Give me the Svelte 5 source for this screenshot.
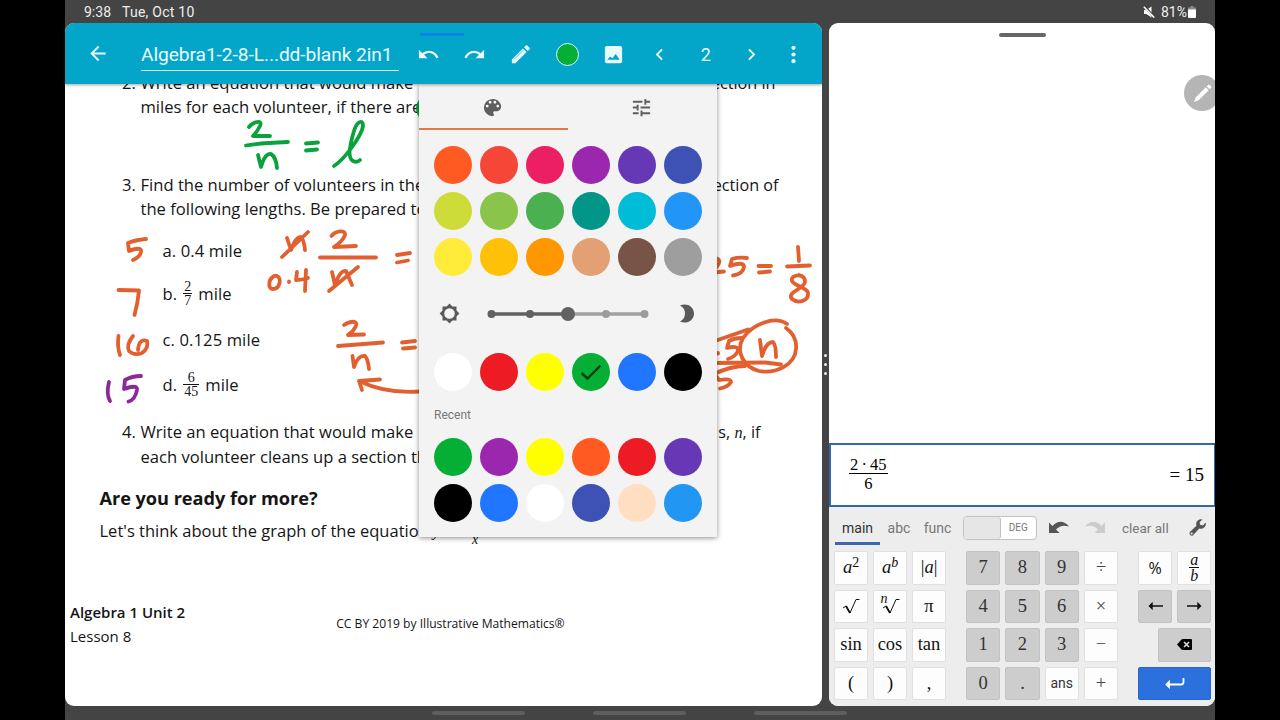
<script>
  const palette = [
    '#ff5a22', '#f64637', '#ec1e64', '#9b27af', '#6738b6', '#3e51b4',
    '#cddc39', '#8bc44a', '#4bb050', '#029688', '#00bcd6', '#2196f8',
    '#ffeb3a', '#ffc107', '#ff9800', '#e3a072', '#785447', '#9e9e9e'
  ];
  const basics = ['#ffffff', '#ed1b24', '#ffff00', '#05ae34', '#2176ff', '#000000'];
  const recent = [
    '#05ae34', '#9b27af', '#ffff00', '#ff5a22', '#ed1b24', '#6738b6',
    '#000000', '#2176ff', '#ffffff', '#3e51b4', '#ffdec2', '#2196f3'
  ];

  let selected = $state('#05ae34');

  const numberKeys = [
    '7', '8', '9', '÷',
    '4', '5', '6', '×',
    '1', '2', '3', '−',
    '0', '.', 'ans', '+'
  ];

  const isDigit = (key) => /^[0-9.]$/.test(key);
</script>

{#snippet frac(top, bottom)}
  <span class="frac"><span>{top}</span><span>{bottom}</span></span>
{/snippet}

{#snippet swatches(colors, checkable)}
  <div class="swatches">
    {#each colors as color}
      <button class="swatch" style:background={color} aria-label={color} onclick={() => (selected = color)}>
        {#if checkable && color === selected}
          <svg viewBox="0 0 38 38"><path d="M9.5 20l6 5.500L28.500 12.500" fill="none" stroke="#07401a" stroke-width="2.400" /></svg>
        {/if}
      </button>
    {/each}
  </div>
{/snippet}

<div class="screen">
  <div class="tablet">
    <header class="status">
      <span>9:38</span>
      <span class="date">Tue, Oct 10</span>
      <svg class="mute" viewBox="0 0 12 12">
        <path d="M1 4h2.500L8.500 .5v11L3.500 8H1z" fill="#fff" />
        <path d="M1.500 .5l10 11" stroke="#444" stroke-width="2.600" />
        <path d="M.8 .8l10.400 10.800" stroke="#fff" stroke-width="1.500" />
      </svg>
      <span>81%</span>
      <svg class="battery" viewBox="0 0 8 12">
        <path d="M2.500 0h3v1.500H8V4H0V1.500h2.500z" fill="#8a8a8a" />
        <path d="M0 3.500h8V11q0 1-1 1H1q-1 0-1-1z" fill="#fff" />
      </svg>
    </header>

    <main class="panes">
      <section class="pane notes">
        <nav class="toolbar">
          <svg class="icon back" viewBox="0 0 24 24"><path d="M20 11H7.830l5.590-5.590L12 4l-8 8 8 8 1.410-1.410L7.830 13H20z" /></svg>
          <span class="title">Algebra1-2-8-L...dd-blank 2in1</span>
          <div class="tools">
            <svg class="icon" viewBox="0 0 24 24"><path d="M12.500 8c-2.650 0-5.050.99-6.900 2.600L2 7v9h9l-3.620-3.620c1.390-1.160 3.160-1.880 5.120-1.880 3.540 0 6.550 2.310 7.600 5.500l2.370-.78C21.080 11.030 17.150 8 12.500 8z" /></svg>
            <svg class="icon" viewBox="0 0 24 24"><path d="M18.400 10.600C16.550 8.990 14.150 8 11.500 8c-4.650 0-8.580 3.030-9.960 7.220L3.900 16c1.050-3.190 4.050-5.500 7.600-5.500 1.950 0 3.730.72 5.120 1.880L13 16h9V7z" /></svg>
            <svg class="icon" viewBox="0 0 24 24"><path d="M3 17.200l11.500-11.500 3.800 3.800L6.800 21H3zM15.700 4.500l1.900-1.900q.7-.7 1.400 0l2.400 2.400q.7.7 0 1.400l-1.900 1.900z" /><path d="M5.600 16.800l9.300-9.300" stroke="#03a5c9" stroke-width=".7" /></svg>
            <span class="pen-color" style:background={selected}></span>
            <svg class="icon" viewBox="0 0 24 24"><path d="M21 19V5a2 2 0 0 0-2-2H5a2 2 0 0 0-2 2v14a2 2 0 0 0 2 2h14a2 2 0 0 0 2-2z" /><path d="M5.500 17.500l3-3.500 2.300 2 3.500-4.500 4.200 6z" fill="#03a5c9" /></svg>
            <svg class="icon" viewBox="0 0 24 24"><path d="M15.410 7.410L14 6l-6 6 6 6 1.410-1.410L10.830 12z" /></svg>
            <span class="page">2</span>
            <svg class="icon" viewBox="0 0 24 24"><path d="M10 6L8.590 7.410 13.170 12l-4.580 4.590L10 18l6-6z" /></svg>
            <svg class="icon" viewBox="0 0 24 24"><circle cx="12" cy="5" r="2.200" /><circle cx="12" cy="12" r="2.200" /><circle cx="12" cy="19" r="2.200" /></svg>
          </div>
          <span class="load-bar"></span>
        </nav>

        <article class="doc">
          <ol class="problems">
            <li>
              <span class="num">2.</span>
              <div class="body">
                <p><span>Write an equation that would make</span><span class="tail t2">section in</span></p>
                <p><span>miles for each volunteer, if there are</span></p>
              </div>
            </li>
            <li class="third">
              <span class="num">3.</span>
              <div class="body">
                <p><span>Find the number of volunteers in the</span><span class="tail t3">section of</span></p>
                <p><span>the following lengths. Be prepared to</span></p>
                <ul class="parts">
                  <li>a. 0.4 mile</li>
                  <li>b. {@render frac('2', '7')} mile</li>
                  <li>c. 0.125 mile</li>
                  <li>d. {@render frac('6', '45')} mile</li>
                </ul>
              </div>
            </li>
            <li class="fourth">
              <span class="num">4.</span>
              <div class="body">
                <p><span>Write an equation that would make</span><span class="tail t4">s, <i>n</i>, if</span></p>
                <p><span>each volunteer cleans up a section th</span></p>
              </div>
            </li>
          </ol>
          <h2>Are you ready for more?</h2>
          <p class="think">Let's think about the graph of the equation <i class="y">y</i><i class="x">x</i></p>
          <footer>
            <div><b>Algebra 1 Unit 2</b><br />Lesson 8</div>
            <small>CC BY 2019 by Illustrative Mathematics®</small>
          </footer>
        </article>

        <svg class="ink" viewBox="65 84 757 622">
          <g stroke="#0aa23c">
            <path d="M249 127C253 122 263 119 260 126Q257 132 253 136L270 136" />
            <path d="M246 145.500Q260 143 288 142" />
            <path d="M258 155L261 167Q265 153 271 154Q276 157 277 168" />
            <path d="M306 143.500L318 142.500M306 150.500L317 149.500" />
            <path d="M334 166C345 159 362 135 363 126C363 119 357 121 354 131C350 144 347 158 353 161Q357 163 360 160" />
            <path d="M422 99Q414 108 422 118" />
          </g>
          <g stroke="#e2602f">
            <path d="M146 239Q135 240 128 243L129 251Q142 246 141 252Q140 257 133 260" />
            <path d="M118.500 290L139 290.500Q138 302 134.500 315" />
            <path d="M118.500 336Q117 347 120 355M133 336Q126 345 129 351Q134 356 142 353Q149 348 147 341Q139 338 138 350" />
            <path d="M287 238L291 250Q296 236 301 237Q304 240 305 250M282 257L308 232" />
            <path d="M331.500 236C335 231 346 229 345 235Q343 241 334 247L356 246M320 257.500L376 257.500" />
            <path d="M397 255L410 253M397 262.500L408 260.500" />
            <path d="M273 277C268 280 268 289 273 289C280 289 282 278 277 276Q274 275 272 278M289 281.500L289 282M297 272L296 280Q302 280 308 278M306 270L305 291" />
            <path d="M332 272L335 285Q340 270 346 271L352 285M329 291L358 267" />
            <path d="M344 325C350 321 358 320 356 326Q353 332 348 335L364 334.500M338 346L383 342.500" />
            <path d="M352.500 356L354 367Q358 355 365 356Q368 359 369 369M402 342.500L415 341M403 348.500L415 347.500" />
            <path d="M420 391.500Q386 394 359 381L380 379.500M359 381L362 390" />
            <path d="M714 258Q722 259 718 265L713 272.500L724 271.500M747 258Q738 257 732 259L730 266Q744 261 744 267Q743 274 733 275.500" />
            <path d="M758.500 266L771 266M759 272.500L770 271.500M798 247L799 261M787 266.500L810 265.500" />
            <path d="M804 278C800 273 790 276 792 281C794 286 807 287 808 293C809 301 798 304 792 299C786 292 804 289 805 282Q805 276 799 275" />
            <path d="M787 324C774 315 752 325 743 338C735 352 744 367 759 371C776 374 795 365 796 349C797 339 793 333 786 328" />
            <path d="M760 340L762 356Q766 342 773 342Q776 345 776 357M715 363L765 362.500L781 364.500" />
            <path d="M715 341L748 329.500M741 338Q734 338 729 341L727 348Q739 345 738 351Q735 357 728 359M718 353L718 353.500" />
            <path d="M714 374Q731 366 745 366M717 377L719 380Q731 378 731 382Q728 387 720 388.500" />
          </g>
          <g stroke="#8a2a97">
            <path d="M109 382Q106 394 110 401M141 376Q132 376 125 380L124 389Q138 384 137 390Q135 400 128.500 401.500" />
          </g>
        </svg>

        <aside class="picker">
          <div class="tabs">
            <div class="tab active">
              <svg viewBox="0 0 24 24"><path d="M12 3a9 9 0 0 0 0 18c.83 0 1.500-.67 1.500-1.500 0-.39-.15-.74-.39-1.010-.23-.26-.38-.61-.38-.99 0-.83.67-1.500 1.500-1.500H16c2.760 0 5-2.240 5-5 0-4.420-4.030-8-9-8zm-5.500 9a1.500 1.500 0 1 1 0-3 1.500 1.500 0 0 1 0 3zm3-4a1.500 1.500 0 1 1 0-3 1.500 1.500 0 0 1 0 3zm5 0a1.500 1.500 0 1 1 0-3 1.500 1.500 0 0 1 0 3zm3 4a1.500 1.500 0 1 1 0-3 1.500 1.500 0 0 1 0 3z" /></svg>
            </div>
            <div class="tab">
              <svg viewBox="0 0 24 24"><path d="M3 17v2h6v-2H3zM3 5v2h10V5H3zm10 16v-2h8v-2h-8v-2h-2v6h2zM7 9v2H3v2h4v2h2V9H7zm14 4v-2H11v2h10zm-6-4h2V7h4V5h-4V3h-2v6z" /></svg>
            </div>
          </div>
          {@render swatches(palette, false)}
          <div class="brightness">
            <svg class="sun" viewBox="0 0 24 24"><path d="M20 8.690V4h-4.690L12 .69 8.690 4H4v4.690L.69 12 4 15.310V20h4.690L12 23.310 15.310 20H20v-4.690L23.310 12zM12 18a6 6 0 1 1 0-12 6 6 0 0 1 0 12z" /></svg>
            <svg class="track" viewBox="0 0 162 16">
              <path d="M81 8h77" stroke="#a0a0a0" stroke-width="3.500" />
              <path d="M4 8h77" stroke="#616161" stroke-width="3.500" />
              <g fill="#616161"><circle cx="4.500" cy="8" r="4" /><circle cx="43" cy="8" r="4" /><circle cx="81" cy="8" r="7" /></g>
              <g fill="#9c9c9c"><circle cx="119" cy="8" r="4" /><circle cx="157.500" cy="8" r="4" /></g>
            </svg>
            <svg class="moon" viewBox="0 0 14 19"><path d="M0 1.500C6-1.500 14 2 14 9.500S6 20.500 0 17.500Q5 15 5 9.500T0 1.500z" /></svg>
          </div>
          {@render swatches(basics, true)}
          <span class="recent-label">Recent</span>
          {@render swatches(recent, false)}
        </aside>
      </section>

      <div class="divider"><i></i><i></i><i></i></div>

      <section class="pane calc">
        <div class="history">
          <span class="handle"></span>
          <span class="edit">
            <svg viewBox="0 0 20 20"><path d="M1 19l2-5L13.500 3.500l3 3L6 17zM14.500 2.500L16 1q.8-.7 1.500 0L19 2.500q.7.8 0 1.500l-1.500 1.500z" fill="#fff" /></svg>
          </span>
        </div>
        <div class="expression">
          {@render frac('2 · 45', '6')}
          <span class="result">= 15</span>
        </div>
        <div class="keypad">
          <div class="modes">
            <span class="mode on">main</span>
            <span class="mode">abc</span>
            <span class="mode">func</span>
            <div class="angle"><span></span><span>DEG</span></div>
            <svg class="undo" viewBox="0 0 20 14"><path d="M0 2.500V13h10.500L7 9.500Q12 4 20 6.500Q12-2.500 3.500 6z" /></svg>
            <svg class="undo redo" viewBox="0 0 20 14"><path d="M20 2.500V13H9.500L13 9.500Q8 4 0 6.500Q8-2.500 16.500 6z" /></svg>
            <span class="clear">clear all</span>
            <svg class="wrench" viewBox="0 0 16 16"><path d="M.8 12.200L7 6.300Q6 3.500 8.200 1.500 10-.2 12.700.3L10 3l.5 2.500 2.500.5 2.700-2.700Q16.300 6 14.500 7.800 12.500 9.800 9.700 9L3.800 15.200Q2.500 16.300 1.200 15T.8 12.200zM2.500 12.700a.9.9 0 1 0 .1 0z" fill-rule="evenodd" /></svg>
          </div>
          <div class="keys">
            <div class="group fn">
              <button><i>a</i><sup>2</sup></button>
              <button><i>a</i><sup><i>b</i></sup></button>
              <button class="abs">|<i>a</i>|</button>
              <button aria-label="square root"><svg class="root" viewBox="0 0 18 17"><path d="M1 10l3-2 4 7L14 1.500h3.500" /><path d="M4 8l4 7" class="thick" /></svg></button>
              <button aria-label="nth root" class="nth"><i>n</i><svg class="root" viewBox="0 0 18 17"><path d="M1 10l3-2 4 7L14 1.500h3.500" /><path d="M4 8l4 7" class="thick" /></svg></button>
              <button>π</button>
              <button>sin</button>
              <button>cos</button>
              <button>tan</button>
              <button>(</button>
              <button>)</button>
              <button>,</button>
            </div>
            <div class="group digits">
              {#each numberKeys as key}
                <button class:dark={isDigit(key)} class:ans={key === 'ans'} class:op={!isDigit(key) && key !== 'ans'}>{key}</button>
              {/each}
            </div>
            <div class="group nav">
              <button class="percent">%</button>
              <button>{@render frac('a', 'b')}</button>
              <button class="dark" aria-label="left"><svg class="arrow" viewBox="0 0 15 8"><path d="M15 4H2M4 1.500L1.500 4 4 6.500z" /></svg></button>
              <button class="dark" aria-label="right"><svg class="arrow" viewBox="0 0 15 8"><path d="M0 4h13M11 1.500L13.500 4 11 6.500z" /></svg></button>
              <button class="dark backspace" aria-label="backspace">
                <svg viewBox="0 0 15 11"><path d="M0 5.500L4.500 .5Q5 0 6 0h8q1 0 1 1v9q0 1-1 1H6q-1 0-1.500-.5z" /><path d="M7 3l5 5M12 3L7 8" stroke="#ddd" stroke-width="1.600" /></svg>
              </button>
              <button class="enter" aria-label="enter">
                <svg viewBox="0 0 20 12"><path d="M18.500 1v4q0 2.500-2.500 2.500H3M4 5L1.500 7.500 4 10z" fill="none" stroke="#fff" stroke-width="1.800" /></svg>
              </button>
            </div>
          </div>
        </div>
      </section>
    </main>

    <div class="gesture"><i></i><i></i><i></i></div>
  </div>
</div>

<style>
  :global(body) {
    background: #000;
    overflow: hidden;
  }

  .screen {
    width: 1280px;
    height: 720px;
    box-sizing: border-box;
    padding: 0 65px;
    background: #000;
    font-family: Roboto, sans-serif;
  }

  .tablet {
    height: 720px;
    background: #444;
    display: flex;
    flex-direction: column;
    overflow: hidden;
  }

  .status {
    height: 23px;
    display: flex;
    align-items: center;
    padding: 0 19px 0 19px;
    color: #eee;
    font-size: 14px;
  }

  .date {
    margin-left: 11px;
    flex: 1;
    letter-spacing: 0.25px;
  }

  .mute {
    width: 12px;
    height: 12px;
    margin-right: 6px;
  }

  .battery {
    width: 8px;
    height: 12px;
    margin-left: 1px;
  }

  .panes {
    height: 683px;
    display: flex;
  }

  .pane {
    position: relative;
    background: #fff;
    border-radius: 9px;
    overflow: hidden;
  }

  .notes {
    width: 756.500px;
  }

  .toolbar {
    height: 61px;
    display: flex;
    align-items: center;
    background: #03a5c9;
    box-shadow: 0 1px 3px rgba(0, 0, 0, 0.35);
    position: relative;
    z-index: 3;
    color: #e9fbff;
  }

  .icon {
    width: 23px;
    height: 23px;
    fill: #e9fbff;
  }

  .back {
    width: 24px;
    margin-left: 21px;
  }

  .title {
    width: 258px;
    height: 30px;
    line-height: 28px;
    margin: 4px 0 0 31px;
    box-sizing: border-box;
    border-bottom: 1px solid #c9f1f9;
    font-size: 19.200px;
    letter-spacing: -0.08px;
    white-space: nowrap;
  }

  .tools {
    display: grid;
    grid-template-columns: repeat(8, 46.200px) 36px;
    align-items: center;
    justify-items: center;
    margin: 1px 0 0 6.500px;
  }

  .pen-color {
    width: 21px;
    height: 21px;
    border: 1.500px solid #d8f7ff;
    border-radius: 50%;
  }

  .page {
    font-size: 18px;
  }

  .load-bar {
    position: absolute;
    left: 355px;
    top: 10px;
    width: 44px;
    height: 3px;
    background: #0a84e8;
  }

  .doc {
    height: 622px;
    overflow: hidden;
    font-family: 'Open Sans', sans-serif;
    font-size: 16.600px;
    line-height: 24px;
    color: #151515;
    white-space: nowrap;
  }

  .problems,
  .parts {
    list-style: none;
    margin: 0;
    padding: 0;
  }

  .problems {
    margin-top: -13px;
    padding-left: 57px;
  }

  .problems > li {
    display: flex;
  }

  .num {
    width: 18.500px;
  }

  .body {
    flex: 1;
  }

  p {
    margin: 0;
    display: flex;
    justify-content: space-between;
  }

  .tail {
    font-size: 16.200px;
  }

  .t2 {
    margin-right: 46px;
  }

  .t3 {
    margin-right: 43px;
  }

  .t4 {
    margin-right: 61px;
  }

  i {
    font-family: 'Liberation Serif', serif;
  }

  .third {
    margin-top: 54px;
  }

  .fourth {
    margin-top: 23px;
  }

  .parts {
    margin: 18px 0 0 22px;
    display: grid;
    grid-template-rows: 43px 46px 45px 24px;
  }

  .parts li {
    display: flex;
    align-items: center;
    height: 24px;
    gap: 6px;
    font-size: 16.600px;
    letter-spacing: 0.1px;
  }

  .frac {
    display: inline-flex;
    flex-direction: column;
    align-items: center;
    font-family: 'Liberation Serif', serif;
    font-size: 13px;
    line-height: 12px;
  }

  .frac span {
    padding: 0 1px;
  }

  .frac span + span {
    border-top: 1px solid currentColor;
    align-self: stretch;
    text-align: center;
    padding-top: 1px;
  }

  .parts .frac {
    font-size: 14px;
    letter-spacing: 0;
  }

  h2 {
    margin: 17px 0 0 34.500px;
    font-size: 18.200px;
    line-height: 24px;
    letter-spacing: -0.05px;
  }

  .think {
    height: 24px;
    margin: 8.500px 0 0 34.500px;
    justify-content: flex-start;
    font-size: 16.500px;
  }

  .y {
    margin-left: 4px;
  }

  .x {
    margin: 9px 0 0 32px;
    font-size: 14px;
  }

  footer {
    margin: 57.500px 0 0 5px;
    display: flex;
    align-items: center;
    font-size: 15px;
  }

  footer b {
    font-weight: 600;
  }

  footer small {
    margin-left: 151px;
    font-size: 12.100px;
  }

  .ink {
    position: absolute;
    left: 0;
    top: 61px;
    width: 757px;
    height: 622px;
    fill: none;
    stroke-width: 3.800;
    stroke-linecap: round;
    stroke-linejoin: round;
  }

  .picker {
    position: absolute;
    left: 354px;
    top: 61px;
    width: 298px;
    height: 453px;
    background: #f3f3f3;
    box-shadow: 0 1px 5px rgba(0, 0, 0, 0.45);
    z-index: 2;
  }

  .tabs {
    display: flex;
    height: 46px;
    margin-bottom: 15.500px;
  }

  .tab {
    flex: 1;
    display: flex;
    justify-content: center;
    box-sizing: border-box;
    padding: 12px 2px 0 0;
  }

  .tab svg {
    width: 23px;
    height: 23px;
    fill: #5f5f5f;
  }

  .active {
    border-bottom: 2px solid #e07a41;
  }

  .swatches {
    display: grid;
    grid-template-columns: repeat(6, 38px);
    gap: 8px;
    padding-left: 15px;
  }

  .swatch {
    height: 38px;
    padding: 0;
    border: 0;
    border-radius: 50%;
  }

  .swatch svg {
    display: block;
  }

  .brightness {
    height: 77px;
    box-sizing: border-box;
    display: flex;
    align-items: center;
    padding: 0 0 1px 20px;
  }

  .sun {
    width: 21px;
    height: 21px;
    fill: #5a5a5a;
  }

  .track {
    width: 162px;
    height: 16px;
    margin-left: 27px;
  }

  .moon {
    width: 14px;
    height: 19px;
    margin-left: 31px;
    fill: #5a5a5a;
  }

  .recent-label {
    display: block;
    height: 47px;
    line-height: 49px;
    padding-left: 15px;
    font-size: 12px;
    color: #777;
  }

  .divider {
    width: 7.500px;
    display: flex;
    flex-direction: column;
    align-items: center;
    justify-content: center;
    gap: 6px;
  }

  .divider i {
    width: 3px;
    height: 3px;
    border-radius: 50%;
    background: #eee;
  }

  .calc {
    width: 386px;
    display: flex;
    flex-direction: column;
  }

  .history {
    height: 420px;
    display: flex;
    justify-content: center;
  }

  .handle {
    width: 47px;
    height: 4px;
    margin-top: 9.500px;
    border-radius: 2px;
    background: #666;
  }

  .edit {
    position: absolute;
    right: -5px;
    top: 52px;
    width: 36px;
    height: 36px;
    border-radius: 50%;
    background: #b5b5b5;
    display: flex;
    align-items: center;
    justify-content: center;
  }

  .edit svg {
    width: 19px;
    height: 19px;
  }

  .expression {
    height: 64px;
    box-sizing: border-box;
    border: 2px solid #3069ad;
    border-right-width: 1px;
    display: flex;
    align-items: center;
    justify-content: space-between;
    padding: 0 10px 3px 18px;
    font-family: 'Liberation Serif', serif;
  }

  .expression .frac {
    font-size: 16.500px;
    line-height: 17px;
    word-spacing: -1px;
  }

  .result {
    font-size: 19px;
    margin-top: 3px;
  }

  .keypad {
    flex: 1;
    background: #ededed;
  }

  .modes {
    height: 38px;
    display: flex;
    align-items: center;
    padding-left: 6px;
    font-size: 14px;
    color: #777;
  }

  .mode {
    height: 38px;
    line-height: 42px;
    width: 39px;
    text-align: center;
    box-sizing: border-box;
  }

  .on {
    width: 45px;
    color: #333;
    border-bottom: 3px solid #3d66b3;
  }

  .on + .mode {
    width: 38px;
  }

  .angle {
    display: flex;
    width: 74px;
    height: 24px;
    margin: 4px 0 0 6px;
    box-sizing: border-box;
    border: 1px solid #c2c2c2;
    border-radius: 4px;
    background: #fff;
    font-size: 10px;
    line-height: 22px;
    text-align: center;
  }

  .angle span {
    flex: 1;
  }

  .angle span:first-child {
    background: #e6e6e6;
    border-right: 1px solid #c2c2c2;
    border-radius: 3px;
  }

  .undo {
    width: 20px;
    height: 14px;
    margin: 2px 0 0 12px;
    fill: #555;
  }

  .redo {
    margin-left: 16px;
    fill: #ccc;
  }

  .clear {
    margin: 4px 0 0 17px;
    font-size: 13.500px;
  }

  .wrench {
    width: 17px;
    height: 17px;
    margin: 2px 0 0 20px;
    fill: #555;
  }

  .keys {
    display: flex;
    margin-top: 6px;
    padding-left: 5px;
  }

  .group {
    display: grid;
    grid-template-rows: repeat(4, 33.500px);
    gap: 5px;
  }

  .fn {
    grid-template-columns: repeat(3, 34px);
  }

  .digits {
    grid-template-columns: repeat(4, 34.300px);
    margin-left: 20px;
  }

  .nav {
    grid-template-columns: repeat(4, 14.500px);
    margin-left: 20px;
  }

  .nav button {
    grid-column: span 2;
  }

  .keys button {
    display: flex;
    align-items: center;
    justify-content: center;
    padding: 0;
    border: 1px solid #e0e0e0;
    border-radius: 2px;
    background: #fdfdfd;
    color: #111;
    font-family: 'Liberation Serif', serif;
    font-size: 18.500px;
  }

  .keys sup {
    font-size: 14px;
    margin-top: -10px;
    line-height: 14px;
  }

  .keys .dark {
    background: #cdcdcd;
    border-color: #c2c2c2;
  }

  .digits .dark {
    color: #333;
  }

  .keys .ans {
    font-family: Roboto, sans-serif;
    font-size: 14px;
    color: #333;
  }

  .keys .op {
    color: #444;
  }

  .keys .percent {
    font-family: 'Open Sans', sans-serif;
    font-size: 16px;
  }

  .keys .frac {
    font-size: 16px;
    font-style: italic;
    line-height: 15px;
  }

  .keys .frac span + span {
    padding-top: 0;
  }

  .root {
    width: 18px;
    height: 17px;
    fill: none;
    stroke: #111;
    stroke-width: 1;
  }

  .thick {
    stroke-width: 1.800;
  }

  .nth i {
    font-size: 14px;
    margin: -14px -6px 0 0;
  }

  .arrow {
    width: 15px;
    height: 8px;
    stroke: #111;
    stroke-width: 1.400;
  }

  .keys .backspace {
    grid-column: 2 / 5;
  }

  .backspace svg {
    width: 15px;
    height: 11px;
  }

  .keys .enter {
    grid-column: 1 / 5;
    background: #2c70dd;
    border-color: #2865c9;
  }

  .enter svg {
    width: 20px;
    height: 12px;
  }

  .gesture {
    flex: 1;
    display: flex;
    justify-content: center;
    gap: 68px;
    padding: 5px 2px 0 0;
  }

  .gesture i {
    width: 93px;
    height: 4px;
    border-radius: 2px;
    background: #5e5e5e;
  }
</style>
